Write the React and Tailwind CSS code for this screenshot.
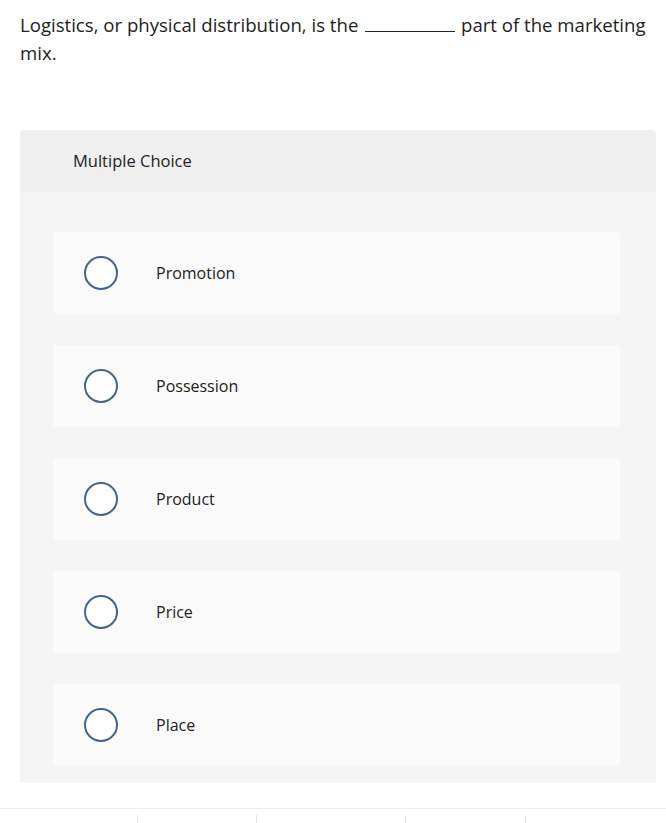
export default function App() {
  const options = ["Promotion", "Possession", "Product", "Price", "Place"];
  return (
    <div className="w-[666px] h-[823px] overflow-hidden bg-white text-[#1a1a1a]" style={{ fontFamily: "'Open Sans', Lato, sans-serif" }}>
      <div className="pl-[20px] pr-[16px] pt-[11px] text-[18.6px] leading-[28px] text-[#222]">
        Logistics, or physical distribution, is the{" "}
        <span className="inline-block w-[90px] border-b border-[#222] align-baseline ml-[2px] mr-[1px]"></span>{" "}
        part of the marketing mix.
      </div>
      <div className="mx-[20px] mt-[63px] w-[636px] rounded-t-[4px] bg-[#f5f5f5]">
        <div className="h-[62px] rounded-t-[4px] bg-[#efefef] pl-[53px] flex items-center text-[16.5px] text-[#222]">
          Multiple Choice
        </div>
        <div className="pt-[40px] pb-[17px] pl-[33px] pr-[36px] flex flex-col gap-[31px]">
          {options.map((o) => (
            <div key={o} className="h-[82px] rounded-[4px] bg-[#fafafa] flex items-center pl-[31px]">
              <span className="w-[34px] h-[34px] rounded-full border-2 border-[#45648a] bg-white shrink-0"></span>
              <span className="ml-[38px] text-[16px] text-[#222]">{o}</span>
            </div>
          ))}
        </div>
      </div>
      <div className="mt-[25px] border-t border-[#eeeeee] flex items-start pt-[6px]">
        <span className="ml-[137px] w-px h-[10px] bg-[#e5e5e5]"></span>
        <span className="ml-[118px] w-px h-[10px] bg-[#e5e5e5]"></span>
        <span className="ml-[148px] w-px h-[10px] bg-[#e5e5e5]"></span>
        <span className="ml-[119px] w-px h-[10px] bg-[#e5e5e5]"></span>
      </div>
    </div>
  );
}
